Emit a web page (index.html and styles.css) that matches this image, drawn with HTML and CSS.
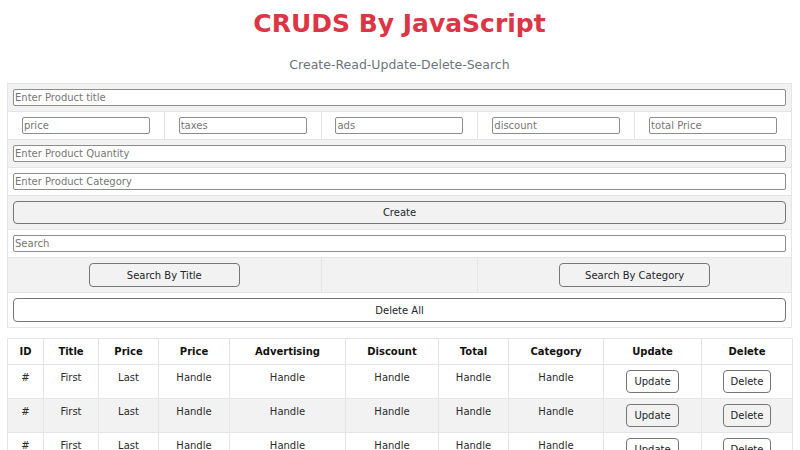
FILE: index.html
```html
<!DOCTYPE html>
<html lang="en">
<head>
<meta charset="utf-8">
<title>CRUDS</title>
<link rel="stylesheet" href="styles.css">
</head>
<body>
<div class="page">
  <h1 class="title">CRUDS By JavaScript</h1>
  <p class="subtitle">Create-Read-Update-Delete-Search</p>

  <table class="form-table">
    <colgroup><col><col><col><col><col></colgroup>
    <tr class="odd"><td colspan="5"><input class="field" type="text" placeholder="Enter Product title"></td></tr>
    <tr class="even price-row">
      <td><input class="small-field" type="number" placeholder="price"></td>
      <td><input class="small-field" type="number" placeholder="taxes"></td>
      <td><input class="small-field" type="number" placeholder="ads"></td>
      <td><input class="small-field" type="number" placeholder="discount"></td>
      <td><input class="small-field" type="text" placeholder="total Price"></td>
    </tr>
    <tr class="odd"><td colspan="5"><input class="field" type="number" placeholder="Enter Product Quantity"></td></tr>
    <tr class="even"><td colspan="5"><input class="field" type="text" placeholder="Enter Product Category"></td></tr>
    <tr class="odd"><td colspan="5"><button class="btn wide create">Create</button></td></tr>
    <tr class="even"><td colspan="5"><input class="field" type="text" placeholder="Search"></td></tr>
    <tr class="odd center-row">
      <td colspan="2"><button class="btn half">Search By Title</button></td>
      <td></td>
      <td colspan="2"><button class="btn half">Search By Category</button></td>
    </tr>
    <tr class="even"><td colspan="5"><button class="btn wide">Delete All</button></td></tr>
  </table>

  <table class="data-table">
    <colgroup>
      <col class="c-id"><col class="c-title"><col class="c-price"><col class="c-price2"><col class="c-ads">
      <col class="c-discount"><col class="c-total"><col class="c-category"><col class="c-update"><col class="c-delete">
    </colgroup>
    <thead>
      <tr>
        <th>ID</th><th>Title</th><th>Price</th><th>Price</th><th>Advertising</th>
        <th>Discount</th><th>Total</th><th>Category</th><th>Update</th><th>Delete</th>
      </tr>
    </thead>
    <tbody>
      <tr class="even">
        <td>#</td><td>First</td><td>Last</td><td>Handle</td><td>Handle</td>
        <td>Handle</td><td>Handle</td><td>Handle</td>
        <td><button class="btn act">Update</button></td><td><button class="btn act">Delete</button></td>
      </tr>
      <tr class="odd">
        <td>#</td><td>First</td><td>Last</td><td>Handle</td><td>Handle</td>
        <td>Handle</td><td>Handle</td><td>Handle</td>
        <td><button class="btn act">Update</button></td><td><button class="btn act">Delete</button></td>
      </tr>
      <tr class="even">
        <td>#</td><td>First</td><td>Last</td><td>Handle</td><td>Handle</td>
        <td>Handle</td><td>Handle</td><td>Handle</td>
        <td><button class="btn act">Update</button></td><td><button class="btn act">Delete</button></td>
      </tr>
    </tbody>
  </table>
</div>
</body>
</html>
```

FILE: styles.css
```css
html, body {
  margin: 0;
  padding: 0;
  overflow: hidden;
  background: #ffffff;
}

body {
  font-family: "DejaVu Sans", "Liberation Sans", sans-serif;
  font-size: 10px;
  color: #212529;
}

.page {
  width: 785px;
  margin-left: 7px;
}

.title {
  margin: 9px 0 0;
  font-size: 25px;
  line-height: 30px;
  font-weight: bold;
  color: #dc3545;
  text-align: center;
}

.subtitle {
  margin: 18px 0 10px;
  font-size: 12.5px;
  line-height: 16px;
  color: #6c757d;
  text-align: center;
}

table {
  width: 785px;
  border-collapse: collapse;
  table-layout: fixed;
  border: 1px solid #e3e5e8;
}

td, th {
  border: 1px solid #e3e5e8;
  padding: 5px;
}

.odd {
  background: #f2f2f2;
}

.even {
  background: #ffffff;
}

.form-table td {
  line-height: 0;
}

.price-row td,
.center-row td {
  text-align: center;
}

.field,
.small-field {
  box-sizing: border-box;
  height: 17px;
  margin: 0;
  padding: 0 1px;
  border: 1px solid #8d8d8d;
  border-radius: 2px;
  background: #ffffff;
  font-family: "DejaVu Sans", sans-serif;
  font-size: 10px;
  color: #212529;
  vertical-align: top;
}

.field {
  width: 100%;
}

.small-field {
  width: 128px;
}

.field::placeholder,
.small-field::placeholder {
  color: #767676;
}

.btn {
  box-sizing: border-box;
  margin: 0;
  border: 1px solid #767676;
  border-radius: 4px;
  background: transparent;
  font-family: "DejaVu Sans", sans-serif;
  font-size: 10px;
  color: #212529;
  vertical-align: top;
}

.wide {
  width: 100%;
  height: 24px;
}

.wide.create {
  height: 23px;
}

.half {
  width: 50%;
  height: 24px;
}

.data-table {
  margin-top: 10px;
}

.data-table th,
.data-table td {
  line-height: 15px;
  text-align: center;
  vertical-align: top;
}

.data-table th {
  font-weight: bold;
  color: #111111;
}

.data-table td {
  color: #2b2b2b;
}

.act {
  height: 23px;
  padding: 0 7px;
  line-height: 21px;
}

.c-id { width: 36px; }
.c-title { width: 55px; }
.c-price { width: 60px; }
.c-price2 { width: 71px; }
.c-ads { width: 116px; }
.c-discount { width: 93px; }
.c-total { width: 70px; }
.c-category { width: 95px; }
.c-update { width: 98px; }
.c-delete { width: 91px; }
```
